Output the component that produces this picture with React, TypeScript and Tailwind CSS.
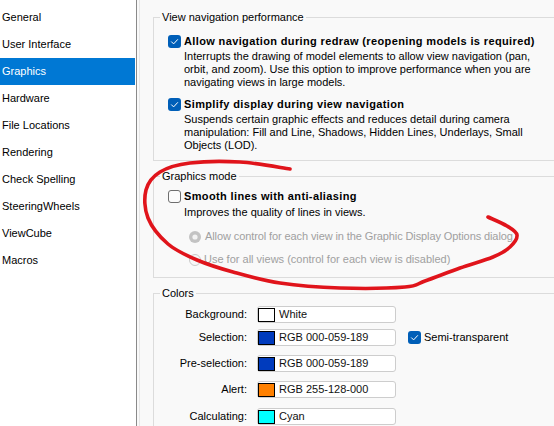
import React from "react";

const items = [
  "General",
  "User Interface",
  "Graphics",
  "Hardware",
  "File Locations",
  "Rendering",
  "Check Spelling",
  "SteeringWheels",
  "ViewCube",
  "Macros",
];

function CheckBox({ checked }: { checked: boolean }) {
  if (checked) {
    return (
      <span className="w-[13px] h-[13px] rounded-[3px] bg-[#005fb8] flex items-center justify-center shrink-0">
        <svg width="13" height="13" viewBox="0 0 13 13">
          <polyline points="3.5,6.8 5.6,8.9 9.6,4.6" fill="none" stroke="#ffffff" strokeWidth="1" strokeLinecap="round" strokeLinejoin="round" />
        </svg>
      </span>
    );
  }
  return <span className="w-[13px] h-[13px] rounded-[3px] border border-[#6e6e6e] bg-[#fbfbfb] shrink-0" />;
}

function Radio({ selected }: { selected: boolean }) {
  return (
    <svg width="12" height="12" viewBox="0 0 12 12" className="shrink-0">
      {selected ? (
        <>
          <circle cx="6" cy="6" r="6" fill="#c3c3c3" />
          <circle cx="6" cy="6" r="2.6" fill="#f3f3f3" />
        </>
      ) : (
        <circle cx="6" cy="6" r="5.5" fill="#f7f7f7" stroke="#c9c9c9" strokeWidth="1" />
      )}
    </svg>
  );
}

function Option({ checked, label, desc, className = "" }: { checked: boolean; label: string; desc: React.ReactNode; className?: string }) {
  return (
    <div className={className}>
      <div className="flex items-center gap-[3px] h-[15px] pl-[14px]">
        <CheckBox checked={checked} />
        <span className="font-bold leading-[15px] whitespace-nowrap tracking-[0.37px]">{label}</span>
      </div>
      <div className="pl-[30px] mt-[1px] leading-[13px]">{desc}</div>
    </div>
  );
}

function ColorRow({ label, swatch, value, className = "", extra }: { label: string; swatch: string; value: string; className?: string; extra?: React.ReactNode }) {
  return (
    <div className={"flex items-center h-[17px] " + className}>
      <span className="w-[93px] text-right whitespace-nowrap">{label}</span>
      <div className="ml-[10px] w-[139px] h-[17px] border border-[#cdcdcd] rounded-[3px] bg-white flex items-center">
        <span className="w-[17px] h-[14px] border border-black" style={{ background: swatch }} />
        <span className="ml-[4px] text-[#111]">{value}</span>
      </div>
      {extra}
    </div>
  );
}

function smoothPath(pts: [number, number][]) {
  let d = `M ${pts[0][0]} ${pts[0][1]}`;
  for (let i = 0; i < pts.length - 1; i++) {
    const p0 = pts[i - 1] || pts[i];
    const p1 = pts[i];
    const p2 = pts[i + 1];
    const p3 = pts[i + 2] || p2;
    const c1x = p1[0] + (p2[0] - p0[0]) / 6;
    const c1y = p1[1] + (p2[1] - p0[1]) / 6;
    const c2x = p2[0] - (p3[0] - p1[0]) / 6;
    const c2y = p2[1] - (p3[1] - p1[1]) / 6;
    d += ` C ${c1x} ${c1y}, ${c2x} ${c2y}, ${p2[0]} ${p2[1]}`;
  }
  return d;
}

const annot: [number, number][] = [
  [290, 169],
  [240, 162],
  [190, 163],
  [160, 172],
  [146, 190],
  [148, 218],
  [168, 244],
  [197, 260],
  [233, 272],
  [280, 283],
  [340, 288],
  [405, 287],
  [425, 281],
  [460, 268],
  [493, 257],
  [510, 247],
  [517, 235],
  [507, 226],
  [488, 217],
];

export default function App() {
  return (
    <div className="relative w-[554px] h-[426px] overflow-hidden flex bg-[#f9f9f9] text-[11px] text-black [font-family:'Segoe_UI','Liberation_Sans',Arial,sans-serif]">
      <div className="w-[137px] h-full bg-white border-r border-[#8a8a8a] pt-[4px] shrink-0">
        {items.map((it) => (
          <div
            key={it}
            className={
              "h-[27px] flex items-center pl-[2px] mr-[1px] whitespace-nowrap " +
              (it === "Graphics" ? "bg-[#0078d4] text-white" : "")
            }
          >
            {it}
          </div>
        ))}
      </div>

      <div className="ml-[2px] border-l border-[#e6e6e6] flex-1 min-w-0 overflow-hidden pl-[13px] pt-[11px]">
        <fieldset className="border border-[#dcdcdc] w-[440px] pb-[8px]">
          <legend className="ml-[6px] px-[2px] leading-[13px]">View navigation performance</legend>
          <Option
            className="mt-[10px]"
            checked
            label="Allow navigation during redraw (reopening models is required)"
            desc={
              <>
                Interrupts the drawing of model elements to allow view navigation (pan,
                <br />
                orbit, and zoom). Use this option to improve performance when you are
                <br />
                navigating views in large models.
              </>
            }
          />
          <Option
            className="mt-[8px]"
            checked
            label="Simplify display during view navigation"
            desc={
              <>
                Suspends certain graphic effects and reduces detail during camera
                <br />
                manipulation: Fill and Line, Shadows, Hidden Lines, Underlays, Small
                <br />
                Objects (LOD).
              </>
            }
          />
        </fieldset>

        <fieldset className="border border-[#dcdcdc] w-[440px] pb-[10px] mt-[9px]">
          <legend className="ml-[6px] px-[2px] leading-[13px]">Graphics mode</legend>
          <div className="mt-[6px]">
            <div className="flex items-center gap-[3px] h-[15px] pl-[14px]">
              <CheckBox checked={false} />
              <span className="font-bold leading-[15px] whitespace-nowrap tracking-[0.37px]">Smooth lines with anti-aliasing</span>
            </div>
            <div className="pl-[30px] mt-[2px] leading-[13px]">Improves the quality of lines in views.</div>
          </div>
          <div className="mt-[10px] h-[15px] flex items-center gap-[4px] pl-[35px] text-[#a0a0a0] whitespace-nowrap tracking-[-0.1px]">
            <Radio selected />
            <span>Allow control for each view in the Graphic Display Options dialog</span>
          </div>
          <div className="mt-[8px] h-[15px] flex items-center gap-[3px] pl-[35px] text-[#a0a0a0] whitespace-nowrap">
            <Radio selected={false} />
            <span>Use for all views (control for each view is disabled)</span>
          </div>
        </fieldset>

        <fieldset className="border border-[#dcdcdc] w-[440px] pb-[10px] mt-[9px]">
          <legend className="ml-[6px] px-[2px] leading-[13px]">Colors</legend>
          <ColorRow className="mt-[6px]" label="Background:" swatch="#ffffff" value="White" />
          <ColorRow
            className="mt-[6px]"
            label="Selection:"
            swatch="#003bbd"
            value="RGB 000-059-189"
            extra={
              <div className="ml-[12px] flex items-center gap-[3px]">
                <CheckBox checked />
                <span>Semi-transparent</span>
              </div>
            }
          />
          <ColorRow className="mt-[9px]" label="Pre-selection:" swatch="#003bbd" value="RGB 000-059-189" />
          <ColorRow className="mt-[9px]" label="Alert:" swatch="#ff8000" value="RGB 255-128-000" />
          <ColorRow className="mt-[10px]" label="Calculating:" swatch="#00ffff" value="Cyan" />
        </fieldset>
      </div>

      <svg className="absolute left-0 top-0 pointer-events-none" width="554" height="426" viewBox="0 0 554 426">
        <path d={smoothPath(annot)} fill="none" stroke="#e0141b" strokeWidth="3.6" strokeLinecap="round" strokeLinejoin="round" />
      </svg>
    </div>
  );
}
